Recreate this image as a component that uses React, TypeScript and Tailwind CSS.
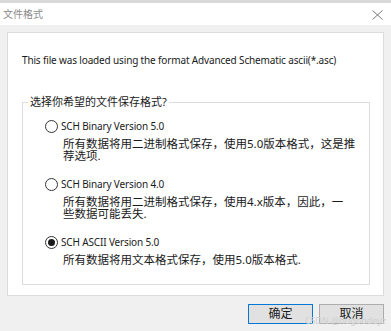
import React from 'react';

const FONT = "font-['Noto_Sans','Noto_Sans_CJK_SC',sans-serif]";

interface OptionProps {
  label: string;
  lines: string[];
  checked?: boolean;
}

function Radio({ checked }: { checked?: boolean }) {
  return (
    <span className="flex h-[13px] w-[13px] shrink-0 items-center justify-center rounded-full border border-[#333333] bg-white">
      {checked && <span className="h-[7px] w-[7px] rounded-full bg-[#1a1a1a]" />}
    </span>
  );
}

function Option({ label, lines, checked }: OptionProps) {
  return (
    <div className="flex flex-col">
      <div className="flex h-[13px] items-center gap-[3px] pl-[22px]">
        <Radio checked={checked} />
        <span className="whitespace-nowrap text-[10px] leading-[13px] tracking-[-0.15px] text-[#1a1a1a]">{label}</span>
      </div>
      <div className="mt-[5px] pl-[40px] text-[11.5px] leading-[12px] text-[#1a1a1a]">
        {lines.map((l) => (
          <div key={l} className="whitespace-nowrap">
            {l}
          </div>
        ))}
      </div>
    </div>
  );
}

export default function App() {
  return (
    <div className={`relative flex h-[331px] w-[391px] flex-col bg-[#f0f0f0] ${FONT}`}>
      <div className="h-[3px] bg-[#d9d9d9]" />
      <div className="flex h-[22px] items-center justify-between bg-white pl-[3px] pr-[8px]">
        <span className="text-[10px] text-[#8a8a8a]">文件格式</span>
        <svg width="11" height="10" viewBox="0 0 11 10" className="mt-[1px]">
          <path d="M0.5 0.5 L10.5 9.5 M10.5 0.5 L0.5 9.5" stroke="#7a7a7a" strokeWidth="1" />
        </svg>
      </div>

      <div className="mx-[7px] mt-[7px] flex h-[264px] flex-col border border-[#dcdcdc] bg-white pl-[14px] pr-[13px] pt-[20px]">
        <p className="whitespace-nowrap text-[10px] leading-[14px] tracking-[-0.15px] text-[#1a1a1a]">
          This file was loaded using the format Advanced Schematic ascii(*.asc)
        </p>

        <fieldset className="mt-[27px] flex flex-col gap-[16px] border border-[#dcdcdc] pb-[18px]">
          <legend className="ml-[5px] px-[2px] text-[11px] leading-[16px] text-[#1a1a1a]">
            选择你希望的文件保存格式?
          </legend>
          <div className="mt-[10px]">
            <Option
              label="SCH Binary Version 5.0"
              lines={['所有数据将用二进制格式保存，使用5.0版本格式，这是推', '荐选项.']}
            />
          </div>
          <Option
            label="SCH Binary Version 4.0"
            lines={['所有数据将用二进制格式保存，使用4.x版本，因此，一', '些数据可能丢失.']}
          />
          <Option label="SCH ASCII Version 5.0" lines={['所有数据将用文本格式保存，使用5.0版本格式.']} checked />
        </fieldset>
      </div>

      <div className="mt-[8px] flex justify-end gap-[6px] pr-[7px]">
        <button className="h-[20px] w-[65px] border border-[#0078d7] bg-[#e1e1e1] text-[12px] text-[#1a1a1a]">
          确定
        </button>
        <button className="h-[20px] w-[65px] border border-[#adadad] bg-[#e1e1e1] text-[12px] text-[#1a1a1a]">
          取消
        </button>
      </div>

      <span className="pointer-events-none absolute right-[5px] top-[316px] text-[9px] leading-[9px] text-[#d0d0d0]">
        CSDN @hugoodeyz
      </span>
    </div>
  );
}
